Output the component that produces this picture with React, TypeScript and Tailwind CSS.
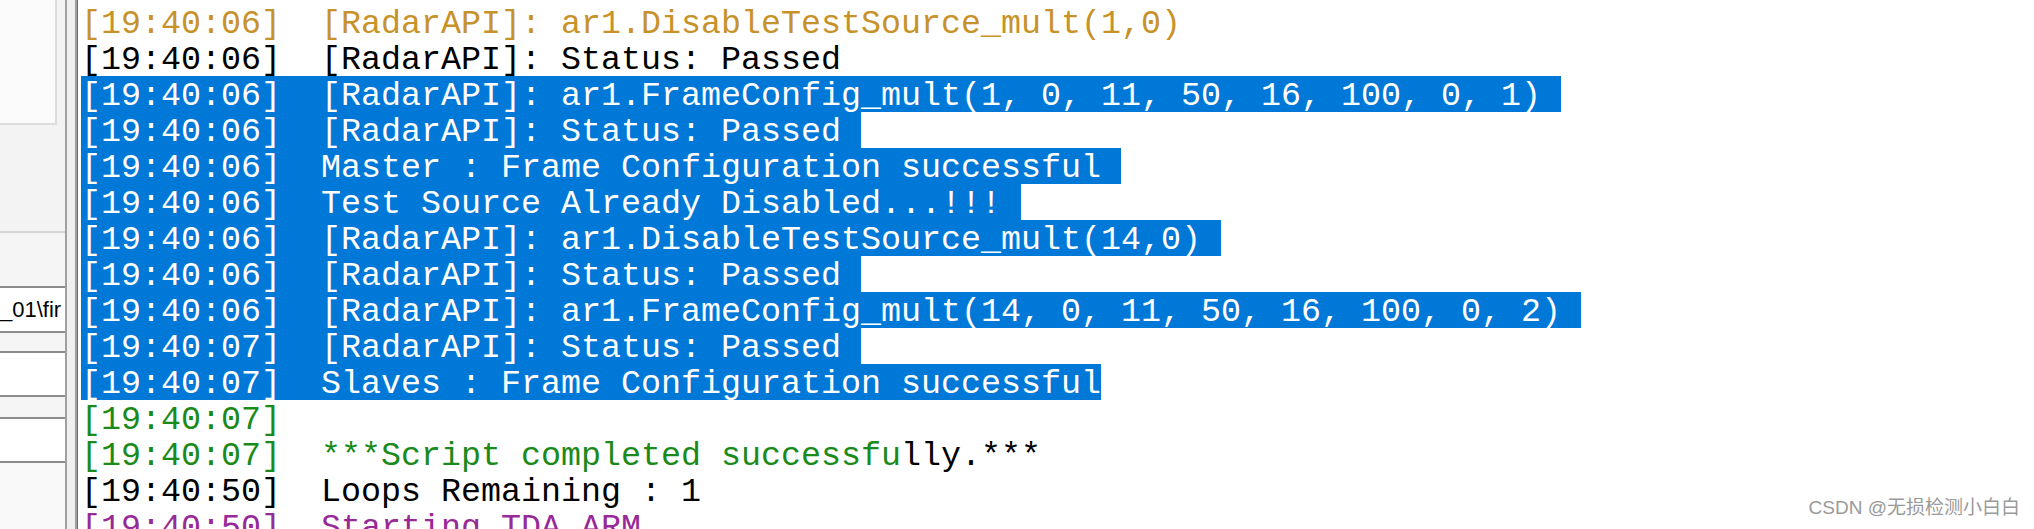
import React from "react";

type Seg = { text: string; color: string };
type LogLine = { segs: Seg[]; selected?: boolean };

const GOLD = "#c8922a";
const GREEN = "#1a8a1a";
const PURPLE = "#982a98";
const BLACK = "#000000";

const line = (text: string, color: string, selected = false): LogLine => ({
  segs: [{ text, color }],
  selected,
});

const lines: LogLine[] = [
  line("[19:40:06]  [RadarAPI]: ar1.DisableTestSource_mult(1,0)", GOLD),
  line("[19:40:06]  [RadarAPI]: Status: Passed", BLACK),
  line("[19:40:06]  [RadarAPI]: ar1.FrameConfig_mult(1, 0, 11, 50, 16, 100, 0, 1) ", "#ffffff", true),
  line("[19:40:06]  [RadarAPI]: Status: Passed ", "#ffffff", true),
  line("[19:40:06]  Master : Frame Configuration successful ", "#ffffff", true),
  line("[19:40:06]  Test Source Already Disabled...!!! ", "#ffffff", true),
  line("[19:40:06]  [RadarAPI]: ar1.DisableTestSource_mult(14,0) ", "#ffffff", true),
  line("[19:40:06]  [RadarAPI]: Status: Passed ", "#ffffff", true),
  line("[19:40:06]  [RadarAPI]: ar1.FrameConfig_mult(14, 0, 11, 50, 16, 100, 0, 2) ", "#ffffff", true),
  line("[19:40:07]  [RadarAPI]: Status: Passed ", "#ffffff", true),
  line("[19:40:07]  Slaves : Frame Configuration successful", "#ffffff", true),
  line("[19:40:07]", GREEN),
  {
    segs: [
      { text: "[19:40:07]  ***Script completed successfu", color: GREEN },
      { text: "lly.***", color: BLACK },
    ],
  },
  line("[19:40:50]  Loops Remaining : 1", BLACK),
  line("[19:40:50]  Starting TDA ARM", PURPLE),
];

const SidePanel = () => (
  <div className="w-[65px] shrink-0 flex flex-col bg-[#f3f3f3] font-['Liberation_Sans',sans-serif]">
    <div className="h-[125px] flex">
      <div className="w-[57px] h-[125px] bg-[#fbfbfb] border-r-2 border-b-2 border-[#dcdcdc]" />
    </div>
    <div className="h-[106px]" />
    <div className="h-[2px] bg-[#d6d6d6]" />
    <div className="h-[53px] bg-[#f5f5f5]" />
    <div className="h-[2px] bg-[#8c8c8c]" />
    <div className="h-[43px] bg-white overflow-hidden whitespace-nowrap text-[22px] leading-[43px] text-black">
      _01\fir
    </div>
    <div className="h-[2px] bg-[#8c8c8c]" />
    <div className="h-[18px] bg-[#f5f5f5]" />
    <div className="h-[2px] bg-[#8c8c8c]" />
    <div className="h-[42px] bg-white" />
    <div className="h-[2px] bg-[#8c8c8c]" />
    <div className="h-[20px] bg-[#f5f5f5]" />
    <div className="h-[2px] bg-[#8c8c8c]" />
    <div className="h-[42px] bg-white" />
    <div className="h-[2px] bg-[#8c8c8c]" />
    <div className="flex-1 bg-[#f9f9f9]" />
  </div>
);

const Divider = () => (
  <div className="flex shrink-0 h-full">
    <div className="w-[2px] bg-[#a0a0a0]" />
    <div className="w-[8px] bg-[#f0f0f0]" />
    <div className="w-[2px] bg-[#a0a0a0]" />
    <div className="w-[1px] bg-[#6e6e6e]" />
  </div>
);

export default function App() {
  return (
    <div className="relative w-[2034px] h-[529px] overflow-hidden bg-white flex">
      <SidePanel />
      <Divider />
      <div className="flex-1 flex flex-col pt-[4px] pl-[3px] font-['Liberation_Mono',monospace] text-[33.333px] whitespace-pre">
        {lines.map((l, i) => (
          <div key={i} className="h-[36px] shrink-0 leading-[41px]">
            <span className={`inline-block h-[36px] align-top ${l.selected ? "bg-[#0078d7]" : ""}`}>
              {l.segs.map((s, j) => (
                <span key={j} style={{ color: s.color }}>
                  {s.text}
                </span>
              ))}
            </span>
          </div>
        ))}
      </div>
      <div className="absolute right-[14px] bottom-[7px] text-[19px] text-[#9a9a9a] font-['Liberation_Sans','Noto_Sans_CJK_SC',sans-serif] whitespace-nowrap">
        CSDN @无损检测小白白
      </div>
    </div>
  );
}
